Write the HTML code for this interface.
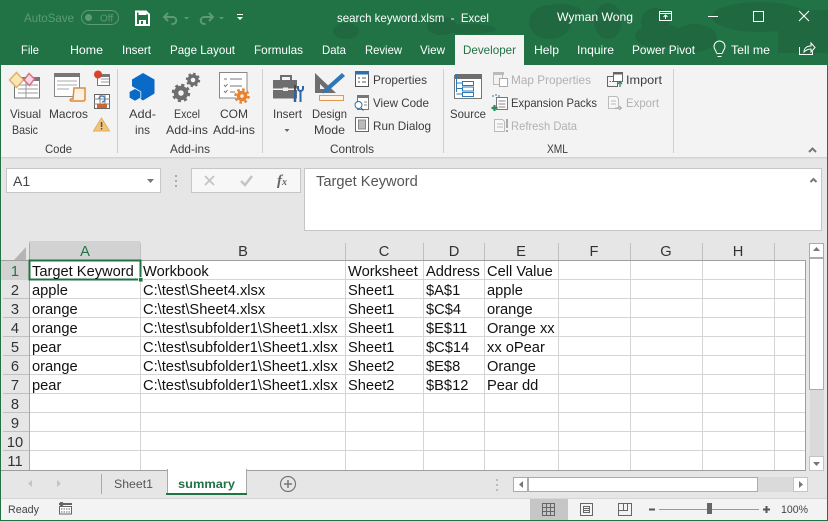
<!DOCTYPE html>
<html><head><meta charset="utf-8"><style>
html,body{margin:0;padding:0;width:828px;height:521px;overflow:hidden;background:#e6e6e6}
svg{display:block;position:absolute;left:0;top:0}
text{font-family:"Liberation Sans",sans-serif;white-space:pre}
.t{font-size:12px;fill:#fff}
.r{font-size:12px;fill:#3c3c3c}
.g{font-size:12px;fill:#b1b1b1}
.c{font-size:14.67px;fill:#111}
.h{font-size:14.67px;fill:#333;text-anchor:middle}
</style></head><body>
<svg width="828" height="521" viewBox="0 0 828 521" xmlns="http://www.w3.org/2000/svg">
<!-- base -->
<rect width="828" height="521" fill="#e6e6e6"/>
<rect width="828" height="65" fill="#217346"/>
<g fill="#1f6840">
<ellipse cx="346" cy="31" rx="13" ry="8"/><ellipse cx="442" cy="26" rx="15" ry="9"/><ellipse cx="550" cy="22" rx="21" ry="17"/><ellipse cx="560" cy="12" rx="22" ry="8"/><ellipse cx="608" cy="21" rx="14" ry="18"/><ellipse cx="655" cy="22" rx="14" ry="14"/><ellipse cx="660" cy="36" rx="25" ry="12"/><ellipse cx="695" cy="38" rx="22" ry="14"/>
<ellipse cx="760" cy="17" rx="48" ry="15"/><rect x="778" y="10" width="50" height="43"/><ellipse cx="470" cy="29" rx="26" ry="5"/>
</g>
<rect x="455" y="35" width="69" height="30" fill="#f3f3f3"/>
<rect x="0" y="65" width="828" height="92" fill="#f3f3f3"/>
<rect x="0" y="157" width="828" height="1.5" fill="#d4d4d4"/>
<g fill="#cfcfcf"><rect x="117" y="69" width="1" height="84"/><rect x="262" y="69" width="1" height="84"/><rect x="443" y="69" width="1" height="84"/><rect x="673" y="69" width="1" height="84"/></g>

<!-- title bar -->
<text class="t" x="24" y="22" textLength="50" lengthAdjust="spacingAndGlyphs" style="fill:#5d9a78">AutoSave</text>
<rect x="81.5" y="10.5" width="37" height="14" rx="7" fill="none" stroke="#5d9a78"/>
<circle cx="88.5" cy="17.5" r="3.5" fill="#5d9a78"/>
<text x="100" y="21.5" style="font-size:10px;fill:#5d9a78">Off</text>
<path d="M136 11.5h10l3 3v10.5h-13z" fill="none" stroke="#fff" stroke-width="2"/><rect x="138.500" y="11" width="8" height="4" fill="#fff"/><rect x="139" y="20" width="7" height="5" fill="#fff"/><rect x="141" y="21" width="2" height="3" fill="#217346"/>
<g fill="none" stroke="#5d9a78" stroke-width="2"><path d="M168 13l-4 4 4 4M164.500 17h8c5 0 5 7 0 7h-1"/><path d="M209 13l4 4-4 4M212.500 17h-8c-5 0-5 7 0 7h1"/></g>
<path d="M184 17h5l-2.500 2.500zM219 17h5l-2.500 2.500z" fill="#5d9a78"/>
<path d="M237 14h6v1h-6zM237 17h6l-3 3z" fill="#fff"/>
<text class="t" x="337" y="22" textLength="152" lengthAdjust="spacingAndGlyphs">search keyword.xlsm  -  Excel</text>
<text class="t" x="557" y="21" textLength="76" lengthAdjust="spacingAndGlyphs">Wyman Wong</text>
<g fill="none" stroke="#fff"><rect x="659.500" y="11.500" width="12" height="9"/><path d="M659 13.500h13M665.500 19v-4M663.500 17l2-2 2 2"/><path d="M708 16.500h10"/><rect x="753.500" y="11.500" width="10" height="10"/><path d="M799 11l10 10M809 11l-10 10" stroke-width="1.100"/></g>

<!-- tabs -->
<text class="t" x="21" y="54" textLength="18" lengthAdjust="spacingAndGlyphs">File</text>
<text class="t" x="70" y="54" textLength="33" lengthAdjust="spacingAndGlyphs">Home</text>
<text class="t" x="122" y="54" textLength="29" lengthAdjust="spacingAndGlyphs">Insert</text>
<text class="t" x="170" y="54" textLength="65" lengthAdjust="spacingAndGlyphs">Page Layout</text>
<text class="t" x="254" y="54" textLength="49" lengthAdjust="spacingAndGlyphs">Formulas</text>
<text class="t" x="322" y="54" textLength="24" lengthAdjust="spacingAndGlyphs">Data</text>
<text class="t" x="365" y="54" textLength="37" lengthAdjust="spacingAndGlyphs">Review</text>
<text class="t" x="420" y="54" textLength="25" lengthAdjust="spacingAndGlyphs">View</text>
<text class="t" x="463" y="54" textLength="53" lengthAdjust="spacingAndGlyphs" style="fill:#217346">Developer</text>
<text class="t" x="534" y="54" textLength="25" lengthAdjust="spacingAndGlyphs">Help</text>
<text class="t" x="577" y="54" textLength="37" lengthAdjust="spacingAndGlyphs">Inquire</text>
<text class="t" x="632" y="54" textLength="63" lengthAdjust="spacingAndGlyphs">Power Pivot</text>
<path d="M717.500 56.500h4M717 53.500h5M716.500 53.500c0-3-2.500-4-2.500-7a5.500 5.500 0 0 1 11 0c0 3-2.500 4-2.500 7" fill="none" stroke="#fff"/>
<text class="t" x="731" y="54" textLength="39" lengthAdjust="spacingAndGlyphs">Tell me</text>
<path d="M799.500 47v7.500h13v-3M804 52c0-4 3-6 7-6v-3l4 4.500-4 4.500v-3c-3 0-5 1-7 3z" fill="none" stroke="#fff"/>

<!-- Visual Basic icon -->
<rect x="14.500" y="78.500" width="25" height="19.500" fill="#fff" stroke="#777"/>
<rect x="15" y="77" width="25" height="4" fill="#777"/>
<path d="M18 85h20M18 89h20M18 93h20M26 82v16" stroke="#999" stroke-width="1"/>
<path d="M16.500 72.500l7 7.500-7 7.500-7-7.500z" fill="#fbe4b5" stroke="#dcb36a" stroke-width="1.500"/>
<path d="M29 73.500l5.500 5.500-5 6.500-5.500-5.500z" fill="#f8d7df" stroke="#d66f8a" stroke-width="1.500"/>
<!-- Macros icon -->
<rect x="54.500" y="74" width="25" height="22.500" fill="#fff" stroke="#888"/>
<rect x="54" y="73" width="26" height="4" fill="#777"/>
<path d="M57 81h20M57 85h20M57 89h12" stroke="#aaa"/>
<path d="M74 88h11v11c0 1.500-1 2-2 2H71c-1 0-1-2 0-2h2z" fill="#fdf1e3" stroke="#dd8a3f" stroke-width="1.500"/>
<!-- small code icons -->
<rect x="97.500" y="76.500" width="12" height="9" fill="#fff" stroke="#777"/><rect x="97" y="74" width="13" height="2.500" fill="#777"/><path d="M101 79h8M101 82h8" stroke="#999"/><circle cx="98" cy="74.500" r="4" fill="#d9432a"/>
<rect x="94.500" y="94.500" width="15" height="14" fill="#fff" stroke="#666"/><path d="M94 99h16M94 104h16M100 95v13M105 95v13" stroke="#888"/><rect x="97" y="104" width="10" height="4" fill="#c63"/><path d="M99 99a3 3 0 1 1 3 3" fill="none" stroke="#4d7ab0" stroke-width="1.500"/>
<path d="M101.500 118l8 13h-16z" fill="#f1c57a" stroke="#e5ae5b"/><rect x="100.800" y="122" width="1.500" height="5" fill="#555"/><rect x="100.800" y="128" width="1.500" height="1.500" fill="#555"/>
<!-- Add-ins -->
<path d="M143 73l11.500 6.500v14l-11.500 7-3-2v-7.500l-7.500-4.500-.5-.500v-6.500z" fill="#0a6ac7"/>
<path d="M135 88.500l5.800 3.200v6.200l-5.800 3.300-5.800-3.300v-6.200z" fill="#0a6ac7" stroke="#f3f3f3" stroke-width=".8"/>
<!-- gears -->
<g fill="none" stroke="#6e6e6e">
<circle cx="181" cy="93" r="5" stroke-width="4.500"/><circle cx="181" cy="93" r="8" stroke-width="2.500" stroke-dasharray="3.140 3.140"/>
<circle cx="193" cy="80" r="4" stroke-width="3.400"/><circle cx="193" cy="80" r="6.200" stroke-width="2" stroke-dasharray="2.430 2.430"/>
</g>
<!-- COM -->
<rect x="219.500" y="72.500" width="27.500" height="25.500" fill="#fff" stroke="#888"/>
<path d="M224 79h3M230 79h12M224 85l1.500 1.500 2-2.500M230 86h12M224 91l1.500 1.500 2-2.500M230 92h5" fill="none" stroke="#777"/>
<circle cx="242" cy="96" r="6.500" fill="#f3f3f3"/>
<circle cx="242" cy="96" r="3.500" fill="none" stroke="#e8822e" stroke-width="3.500"/><circle cx="242" cy="96" r="6.500" fill="none" stroke="#e8822e" stroke-width="2.500" stroke-dasharray="2.550 2.550"/>
<!-- Insert toolbox -->
<path d="M281 80v-4h10v4" fill="none" stroke="#6e6e6e" stroke-width="2"/>
<rect x="273" y="80" width="24" height="8.500" fill="#6e6e6e"/><rect x="273" y="90" width="24" height="8.500" fill="#6e6e6e"/><rect x="283" y="87.500" width="5" height="3.500" fill="#eee"/>
<path d="M295 91v11" stroke="#2a66a6" stroke-width="2.500"/><path d="M295 85v6" stroke="#444" stroke-width="1.800"/><path d="M298 86v2.500a2.500 2.500 0 0 0 5 0v-2.500M300.500 91v11" fill="none" stroke="#2a66a6" stroke-width="2"/>
<path d="M284.500 129h5l-2.500 3z" fill="#666"/>
<!-- Design mode -->
<path d="M315 73l21 20h-21zM320 84v5h5z" fill="#6e6e6e" fill-rule="evenodd"/>
<path d="M324 89l18-16 3 3-18 16-4.500 1.500z" fill="#2f78b8"/>
<rect x="319.500" y="95.500" width="24" height="5" fill="#fff3e6" stroke="#e09a55"/>
<!-- Properties icons -->
<rect x="355.500" y="72.500" width="13" height="14" fill="#fff" stroke="#555"/><rect x="355" y="71" width="14" height="3.500" fill="#2f6fab"/><path d="M358 78h2M362 78h4M358 82h2M362 82h4" stroke="#555"/>
<text class="r" x="373" y="84" textLength="54" lengthAdjust="spacingAndGlyphs">Properties</text>
<rect x="357.500" y="95.500" width="11" height="14" fill="#fff" stroke="#777"/><rect x="357" y="95" width="12" height="3" fill="#777"/><circle cx="358.500" cy="105" r="3.500" fill="#fff" stroke="#2f6fab"/><path d="M361 108l2.500 2.500" stroke="#555"/><path d="M364 102h3M364 105h3" stroke="#888"/>
<text class="r" x="373" y="107" textLength="56" lengthAdjust="spacingAndGlyphs">View Code</text>
<rect x="355.500" y="117.500" width="13" height="14" fill="#fff" stroke="#666"/><rect x="358.500" y="120" width="7" height="9" fill="#bbb" stroke="#888"/>
<text class="r" x="373" y="130" textLength="58" lengthAdjust="spacingAndGlyphs">Run Dialog</text>
<!-- Source -->
<rect x="454.500" y="75.500" width="27" height="23" fill="#fff" stroke="#777"/><rect x="455" y="74" width="27" height="5" fill="#6e6e6e"/>
<path d="M456.500 74v18M456.500 83h6M456.500 88.500h6M456.500 94h6" fill="none" stroke="#2f78b8"/>
<rect x="462.500" y="81.500" width="11" height="4" fill="#fff" stroke="#2f78b8"/><rect x="462.500" y="87" width="11" height="4" fill="#fff" stroke="#2f78b8"/><rect x="462.500" y="92.500" width="11" height="4" fill="#fff" stroke="#2f78b8"/>
<!-- XML icons -->
<rect x="493.500" y="73.500" width="9" height="11" fill="#f3f3f3" stroke="#bbb"/><rect x="493" y="72" width="11" height="3" fill="#bbb"/><rect x="499.500" y="78.500" width="8" height="8" fill="#fff" stroke="#aaa"/>
<text class="g" x="511" y="84" textLength="80" lengthAdjust="spacingAndGlyphs">Map Properties</text>
<rect x="496.500" y="97.500" width="11" height="12" fill="#fff" stroke="#777"/><path d="M498.500 101h7M498.500 104h7M498.500 107h7" stroke="#888"/><path d="M492 96h2M495 95h2M498 96h2" stroke="#2f78b8"/><path d="M494.500 105v6M491.500 108h6" stroke="#2c8a63" stroke-width="2.200"/>
<text class="r" x="511" y="107" textLength="86" lengthAdjust="spacingAndGlyphs">Expansion Packs</text>
<path d="M494.500 119.500h8l2 2v10h-10z" fill="#f7f7f7" stroke="#bbb"/><path d="M497 124h6M497 127h6" stroke="#bbb"/><rect x="506" y="119" width="2" height="9" fill="#aaa"/><rect x="506" y="130" width="2" height="2" fill="#aaa"/>
<text class="g" x="511" y="130" textLength="66" lengthAdjust="spacingAndGlyphs">Refresh Data</text>
<rect x="607.500" y="76.500" width="10" height="10" fill="#f5f5f5" stroke="#666"/><rect x="613.500" y="72.500" width="9" height="9" fill="#fff" stroke="#666"/><rect x="613" y="72" width="10" height="2.500" fill="#666"/><path d="M609.500 81.500h5" stroke="#2f78b8" stroke-dasharray="1.500 1"/><path d="M620 87v-5M618 84l2-2.500 2 2.500" fill="none" stroke="#2c8a63" stroke-width="1.300"/>
<text class="r" x="626" y="84" textLength="36" lengthAdjust="spacingAndGlyphs">Import</text>
<path d="M608.500 96.500h8l2 2v10h-10z" fill="#f7f7f7" stroke="#bbb"/><path d="M611 101h5M611 104h5" stroke="#bbb"/><path d="M615 108h6M619 106l2.500 2-2.500 2" fill="none" stroke="#aaa"/>
<text class="g" x="626" y="107" textLength="33" lengthAdjust="spacingAndGlyphs">Export</text>
<path d="M809 152l3.500-3.500 3.500 3.500" fill="none" stroke="#777" stroke-width="2"/>

<!-- ribbon labels -->
<text class="r" x="10" y="118" textLength="31" lengthAdjust="spacingAndGlyphs">Visual</text>
<text class="r" x="12" y="134" textLength="26" lengthAdjust="spacingAndGlyphs">Basic</text>
<text class="r" x="49" y="118" textLength="39" lengthAdjust="spacingAndGlyphs">Macros</text>
<text class="r" x="45" y="153" textLength="27" lengthAdjust="spacingAndGlyphs">Code</text>
<text class="r" x="129" y="118" textLength="27" lengthAdjust="spacingAndGlyphs">Add-</text>
<text class="r" x="135" y="134" textLength="15" lengthAdjust="spacingAndGlyphs">ins</text>
<text class="r" x="174" y="118" textLength="26" lengthAdjust="spacingAndGlyphs">Excel</text>
<text class="r" x="166" y="134" textLength="42" lengthAdjust="spacingAndGlyphs">Add-ins</text>
<text class="r" x="220" y="118" textLength="28" lengthAdjust="spacingAndGlyphs">COM</text>
<text class="r" x="213" y="134" textLength="42" lengthAdjust="spacingAndGlyphs">Add-ins</text>
<text class="r" x="170" y="153" textLength="40" lengthAdjust="spacingAndGlyphs">Add-ins</text>
<text class="r" x="273" y="118" textLength="29" lengthAdjust="spacingAndGlyphs">Insert</text>
<text class="r" x="312" y="118" textLength="35" lengthAdjust="spacingAndGlyphs">Design</text>
<text class="r" x="314" y="134" textLength="31" lengthAdjust="spacingAndGlyphs">Mode</text>
<text class="r" x="330" y="153" textLength="44" lengthAdjust="spacingAndGlyphs">Controls</text>
<text class="r" x="450" y="118" textLength="36" lengthAdjust="spacingAndGlyphs">Source</text>
<text class="r" x="547" y="153" textLength="21" lengthAdjust="spacingAndGlyphs">XML</text>

<!-- formula bar -->
<rect x="6.500" y="168.500" width="154" height="24" fill="#fff" stroke="#c6c6c6"/>
<text x="13" y="186" style="font-size:14px;fill:#444">A1</text>
<path d="M147 179h7l-3.500 4z" fill="#777"/>
<g fill="#aaa"><rect x="175" y="175" width="2" height="2"/><rect x="175" y="180" width="2" height="2"/><rect x="175" y="185" width="2" height="2"/></g>
<rect x="191.500" y="168.500" width="109" height="24" fill="#f3f3f3" stroke="#c6c6c6"/>
<rect x="192" y="169" width="108" height="23" fill="#f7f7f7"/>
<path d="M205 176l9 9M214 176l-9 9" stroke="#c4c4c4" stroke-width="1.800" fill="none"/>
<path d="M241 181l4 4 7-9" stroke="#c4c4c4" stroke-width="2.500" fill="none"/>
<text x="277" y="185" style="font-size:15px;font-style:italic;font-family:'Liberation Serif',serif;fill:#666;font-weight:bold">f<tspan font-size="10" dy="0">x</tspan></text>
<rect x="304.500" y="168.500" width="517" height="62" fill="#fff" stroke="#c6c6c6"/>
<text x="316" y="186" style="font-size:14.67px;fill:#555">Target Keyword</text>
<path d="M810.500 182l3-3 3 3" fill="none" stroke="#777" stroke-width="2"/>

<!-- grid -->
<rect x="29" y="261" width="776" height="209" fill="#fff"/>
<rect x="1" y="261" width="28" height="209" fill="#e6e6e6"/>
<rect x="1" y="261" width="28" height="19" fill="#d2d2d2"/>
<rect x="29" y="241" width="111" height="19" fill="#d2d2d2"/>
<path d="M26 247v13h-12z" fill="#b5b5b5"/>
<g fill="#d4d4d4">
<rect x="29" y="279" width="776" height="1"/><rect x="29" y="298" width="776" height="1"/><rect x="29" y="317" width="776" height="1"/><rect x="29" y="336" width="776" height="1"/><rect x="29" y="355" width="776" height="1"/><rect x="29" y="374" width="776" height="1"/><rect x="29" y="393" width="776" height="1"/><rect x="29" y="412" width="776" height="1"/><rect x="29" y="431" width="776" height="1"/><rect x="29" y="450" width="776" height="1"/>
<rect x="140" y="261" width="1" height="209"/><rect x="345" y="261" width="1" height="209"/><rect x="423" y="261" width="1" height="209"/><rect x="484" y="261" width="1" height="209"/><rect x="558" y="261" width="1" height="209"/><rect x="630" y="261" width="1" height="209"/><rect x="702" y="261" width="1" height="209"/><rect x="774" y="261" width="1" height="209"/>
</g>
<g fill="#c0c0c0">
<rect x="29" y="279" width="1" height="1"/>
<rect x="140" y="243" width="1" height="18"/><rect x="345" y="243" width="1" height="18"/><rect x="423" y="243" width="1" height="18"/><rect x="484" y="243" width="1" height="18"/><rect x="558" y="243" width="1" height="18"/><rect x="630" y="243" width="1" height="18"/><rect x="702" y="243" width="1" height="18"/><rect x="774" y="243" width="1" height="18"/>
<rect x="3" y="298" width="26" height="1"/><rect x="3" y="317" width="26" height="1"/><rect x="3" y="336" width="26" height="1"/><rect x="3" y="355" width="26" height="1"/><rect x="3" y="374" width="26" height="1"/><rect x="3" y="393" width="26" height="1"/><rect x="3" y="412" width="26" height="1"/><rect x="3" y="431" width="26" height="1"/><rect x="3" y="450" width="26" height="1"/>
</g>
<rect x="1" y="260" width="805" height="1" fill="#a0a0a0"/>
<rect x="29" y="243" width="1" height="227" fill="#a8a8a8"/>
<rect x="805" y="260" width="1" height="211" fill="#9e9e9e"/>
<rect x="1" y="470" width="805" height="1" fill="#9e9e9e"/>
<rect x="29.500" y="260.500" width="111" height="19" fill="none" stroke="#217346" stroke-width="2"/>
<rect x="138.500" y="277.500" width="4.500" height="4.500" fill="#217346" stroke="#fff" stroke-width="0.800"/>

<!-- headers -->
<text class="h" x="85" y="256" style="fill:#217346">A</text><text class="h" x="243" y="256">B</text><text class="h" x="384" y="256">C</text><text class="h" x="454" y="256">D</text><text class="h" x="521" y="256">E</text><text class="h" x="594" y="256">F</text><text class="h" x="666" y="256">G</text><text class="h" x="738" y="256">H</text>
<text class="h" x="15" y="276" style="fill:#217346">1</text><text class="h" x="15" y="295">2</text><text class="h" x="15" y="314">3</text><text class="h" x="15" y="333">4</text><text class="h" x="15" y="352">5</text><text class="h" x="15" y="371">6</text><text class="h" x="15" y="390">7</text><text class="h" x="15" y="409">8</text><text class="h" x="15" y="428">9</text><text class="h" x="15" y="447">10</text><text class="h" x="15" y="466">11</text>

<!-- cells -->
<g class="c">
<text class="c" x="32" y="276">Target Keyword</text><text class="c" x="143" y="276">Workbook</text><text class="c" x="348" y="276">Worksheet</text><text class="c" x="426" y="276">Address</text><text class="c" x="487" y="276">Cell Value</text>
<text class="c" x="32" y="295">apple</text><text class="c" x="143" y="295">C:\test\Sheet4.xlsx</text><text class="c" x="348" y="295">Sheet1</text><text class="c" x="426" y="295">$A$1</text><text class="c" x="487" y="295">apple</text>
<text class="c" x="32" y="314">orange</text><text class="c" x="143" y="314">C:\test\Sheet4.xlsx</text><text class="c" x="348" y="314">Sheet1</text><text class="c" x="426" y="314">$C$4</text><text class="c" x="487" y="314">orange</text>
<text class="c" x="32" y="333">orange</text><text class="c" x="143" y="333">C:\test\subfolder1\Sheet1.xlsx</text><text class="c" x="348" y="333">Sheet1</text><text class="c" x="426" y="333">$E$11</text><text class="c" x="487" y="333">Orange xx</text>
<text class="c" x="32" y="352">pear</text><text class="c" x="143" y="352">C:\test\subfolder1\Sheet1.xlsx</text><text class="c" x="348" y="352">Sheet1</text><text class="c" x="426" y="352">$C$14</text><text class="c" x="487" y="352">xx oPear</text>
<text class="c" x="32" y="371">orange</text><text class="c" x="143" y="371">C:\test\subfolder1\Sheet1.xlsx</text><text class="c" x="348" y="371">Sheet2</text><text class="c" x="426" y="371">$E$8</text><text class="c" x="487" y="371">Orange</text>
<text class="c" x="32" y="390">pear</text><text class="c" x="143" y="390">C:\test\subfolder1\Sheet1.xlsx</text><text class="c" x="348" y="390">Sheet2</text><text class="c" x="426" y="390">$B$12</text><text class="c" x="487" y="390">Pear dd</text>
</g>

<!-- vertical scrollbar -->
<rect x="810" y="243" width="14" height="228" fill="#dadada"/>
<rect x="809.500" y="243.500" width="14" height="14" fill="#fff" stroke="#ababab"/>
<rect x="809.500" y="258.500" width="14" height="131" fill="#fff" stroke="#ababab"/>
<rect x="809.500" y="456.500" width="14" height="14" fill="#fff" stroke="#c4c4c4"/>
<path d="M813 251l3.500-4 3.500 4zM813 462h7l-3.500 4z" fill="#777"/>

<!-- sheet tabs bar -->
<rect x="101" y="474" width="1" height="20" fill="#a8a8a8"/>
<path d="M32 480v7l-4-3.500zM57 480v7l4-3.500z" fill="#c4c4c4"/>
<text x="114" y="488" textLength="39" lengthAdjust="spacingAndGlyphs" style="font-size:12px;fill:#555">Sheet1</text>
<rect x="167" y="470" width="80" height="24" fill="#fff"/>
<rect x="167" y="469" width="1" height="25" fill="#a8a8a8"/><rect x="246" y="469" width="1" height="25" fill="#a8a8a8"/>
<rect x="166" y="493" width="81" height="2" fill="#217346"/>
<text x="178" y="488" textLength="57" lengthAdjust="spacingAndGlyphs" style="font-size:12px;font-weight:bold;fill:#217346">summary</text>
<circle cx="288" cy="484" r="7.500" fill="none" stroke="#777" stroke-width="1.200"/><path d="M284 484h8M288 480v8" stroke="#777" stroke-width="1.500"/>
<g fill="#bbb"><rect x="496" y="479" width="2" height="2"/><rect x="496" y="484" width="2" height="2"/><rect x="496" y="489" width="2" height="2"/></g>
<rect x="513.500" y="477.500" width="14" height="14" fill="#fff" stroke="#ababab"/>
<path d="M523 481v7l-4-3.500z" fill="#777"/>
<rect x="528" y="477" width="265" height="15" fill="#dadada"/>
<rect x="528.500" y="477.500" width="229" height="14" fill="#fff" stroke="#ababab"/>
<rect x="793.500" y="477.500" width="14" height="14" fill="#fff" stroke="#c4c4c4"/>
<path d="M799 481v7l4-3.500z" fill="#777"/>

<!-- status bar -->
<rect x="0" y="498" width="828" height="23" fill="#f3f3f3"/>
<rect x="0" y="498" width="828" height="1" fill="#d6d6d6"/>
<text x="8" y="513" textLength="31" lengthAdjust="spacingAndGlyphs" style="font-size:11px;fill:#444">Ready</text>
<circle cx="61.500" cy="504" r="2" fill="#555"/><rect x="59" y="503" width="13" height="2" fill="#666"/><rect x="59.500" y="506.500" width="12" height="7.500" fill="#fff" stroke="#666"/><path d="M61 509h9M61 512h9" stroke="#666" stroke-dasharray="1.500 1"/>
<rect x="530" y="499" width="38" height="21" fill="#c6c6c6"/>
<g fill="none" stroke="#666"><rect x="542.500" y="503.500" width="12" height="12"/><path d="M546.500 504v11M550.500 504v11M543 507.500h11M543 511.500h11"/>
<rect x="580.500" y="503.500" width="12" height="12"/><rect x="583.500" y="506.500" width="6" height="6"/><path d="M584 508.500h5M584 510.500h5"/>
<rect x="618.500" y="503.500" width="13" height="12"/><path d="M623.500 503.500v7h4v-7M618 510.500h5.500"/></g>
<rect x="649" y="508.500" width="6" height="2" fill="#555"/>
<rect x="659" y="509" width="100" height="1" fill="#999"/>
<rect x="707" y="503" width="5" height="11" fill="#666"/>
<path d="M763 509.500h7M766.500 506v7" stroke="#555" stroke-width="2"/>
<text x="781" y="513" textLength="27" lengthAdjust="spacingAndGlyphs" style="font-size:11px;fill:#444">100%</text>

<!-- window border -->
<rect x="0" y="65" width="1" height="456" fill="#217346"/>
<rect x="827" y="65" width="1" height="456" fill="#217346"/>
<rect x="0" y="520" width="828" height="1" fill="#217346"/>
</svg>
</body></html>
